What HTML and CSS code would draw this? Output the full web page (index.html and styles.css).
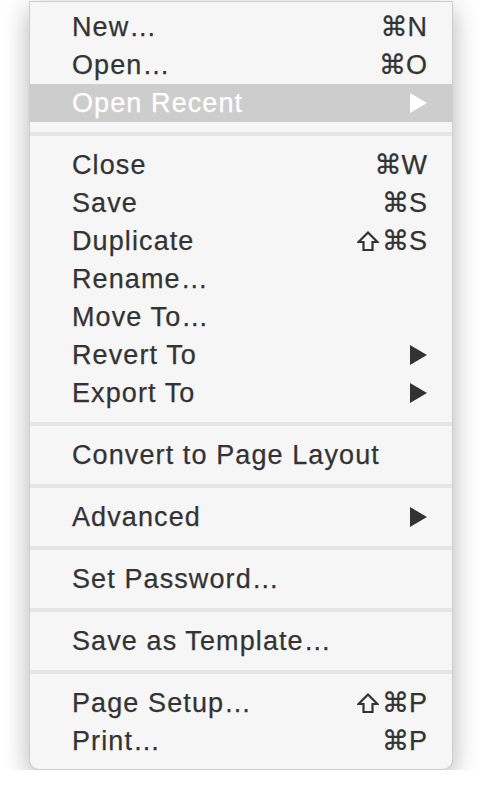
FILE: index.html
```html
<!DOCTYPE html>
<html lang="en">
<head>
    <meta charset="UTF-8">
    <meta name="viewport" content="width=device-width, initial-scale=1.0">
    <title>File Menu</title>
    <link rel="stylesheet" href="styles.css">
</head>
<body>
    <div class="menu">
        <div class="item"><span>New…</span><span class="key">⌘N</span></div>
        <div class="item"><span>Open…</span><span class="key">⌘O</span></div>
        <div class="item active"><span>Open Recent</span><svg class="arrow" viewBox="0 0 17 20"><polygon points="0,0 17,10 0,20"/></svg></div>
        <div class="sep"></div>
        <div class="item"><span>Close</span><span class="key">⌘W</span></div>
        <div class="item"><span>Save</span><span class="key">⌘S</span></div>
        <div class="item"><span>Duplicate</span><span class="key"><svg class="shift" viewBox="0 0 22 20"><path d="M11 1.5 L20.5 11 H15.5 V19 H6.5 V11 H1.5 Z"/></svg>⌘S</span></div>
        <div class="item"><span>Rename…</span></div>
        <div class="item"><span>Move To…</span></div>
        <div class="item"><span>Revert To</span><svg class="arrow" viewBox="0 0 17 20"><polygon points="0,0 17,10 0,20"/></svg></div>
        <div class="item"><span>Export To</span><svg class="arrow" viewBox="0 0 17 20"><polygon points="0,0 17,10 0,20"/></svg></div>
        <div class="sep"></div>
        <div class="item"><span>Convert to Page Layout</span></div>
        <div class="sep"></div>
        <div class="item"><span>Advanced</span><svg class="arrow" viewBox="0 0 17 20"><polygon points="0,0 17,10 0,20"/></svg></div>
        <div class="sep"></div>
        <div class="item"><span>Set Password…</span></div>
        <div class="sep"></div>
        <div class="item"><span>Save as Template…</span></div>
        <div class="sep"></div>
        <div class="item"><span>Page Setup…</span><span class="key"><svg class="shift" viewBox="0 0 22 20"><path d="M11 1.5 L20.5 11 H15.5 V19 H6.5 V11 H1.5 Z"/></svg>⌘P</span></div>
        <div class="item"><span>Print…</span><span class="key">⌘P</span></div>
    </div>
</body>
</html>
```

FILE: styles.css
```css
body {
    margin: 0;
    padding: 1px 0 0 29px;
    background-color: #ffffff;
    font-family: "Liberation Sans", "DejaVu Sans", sans-serif;
}
.menu {
    box-sizing: border-box;
    width: 424px;
    padding: 6px 0 9px;
    background-color: #f6f6f6;
    border: 1px solid rgba(0, 0, 0, 0.16);
    border-radius: 0 0 10px 10px;
    box-shadow: 0 8px 26px rgba(0, 0, 0, 0.3);
}
.item {
    display: flex;
    justify-content: space-between;
    align-items: center;
    height: 38px;
    padding: 0 25px 0 42px;
    color: #333333;
    font-size: 27px;
    letter-spacing: 1.1px;
    -webkit-text-stroke: 0.25px #333333;
}
.item.active {
    background-color: #cdcdcd;
    color: #ffffff;
    -webkit-text-stroke: 0.25px #ffffff;
}
.key {
    display: flex;
    align-items: center;
    gap: 3px;
    letter-spacing: 0;
}
.shift {
    flex-shrink: 0;
    width: 22px;
    height: 20px;
    fill: none;
    stroke: #333333;
    stroke-width: 2.2;
}
.arrow {
    flex-shrink: 0;
    width: 17px;
    height: 20px;
    fill: #333333;
}
.item.active .arrow {
    fill: #ffffff;
}
.sep {
    height: 4px;
    margin: 10px 0;
    background-color: #e5e5e5;
}
```
